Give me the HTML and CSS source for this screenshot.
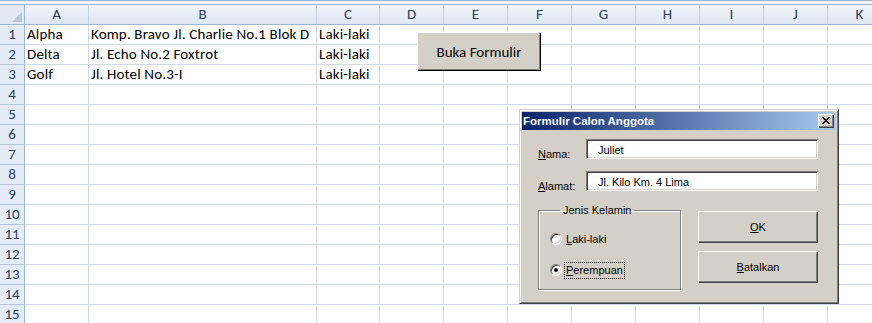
FILE: index.html
```html
<!DOCTYPE html>
<html lang="id">
<head>
<meta charset="utf-8">
<title>Formulir Calon Anggota</title>
<link rel="stylesheet" href="styles.css">
</head>
<body>
<div class="sheet">
  <div class="topline"></div>
  <div class="grid">
    <div class="corner"><svg width="10" height="10" viewBox="0 0 10 10"><polygon points="10,0 10,10 0,10" fill="#b6c7db"/></svg></div>
    <div class="ch">A</div><div class="ch">B</div><div class="ch">C</div><div class="ch">D</div><div class="ch">E</div><div class="ch">F</div><div class="ch">G</div><div class="ch">H</div><div class="ch">I</div><div class="ch">J</div><div class="ch">K</div>

    <div class="rh">1</div><div class="c">Alpha</div><div class="c">Komp. Bravo Jl. Charlie No.1 Blok D</div><div class="c">Laki-laki</div><div class="c"></div><div class="c"></div><div class="c"></div><div class="c"></div><div class="c"></div><div class="c"></div><div class="c"></div><div class="c"></div>
    <div class="rh">2</div><div class="c">Delta</div><div class="c">Jl. Echo No.2 Foxtrot</div><div class="c">Laki-laki</div><div class="c"></div><div class="c"></div><div class="c"></div><div class="c"></div><div class="c"></div><div class="c"></div><div class="c"></div><div class="c"></div>
    <div class="rh">3</div><div class="c">Golf</div><div class="c">Jl. Hotel No.3-I</div><div class="c">Laki-laki</div><div class="c"></div><div class="c"></div><div class="c"></div><div class="c"></div><div class="c"></div><div class="c"></div><div class="c"></div><div class="c"></div>
    <div class="rh">4</div><div class="c"></div><div class="c"></div><div class="c"></div><div class="c"></div><div class="c"></div><div class="c"></div><div class="c"></div><div class="c"></div><div class="c"></div><div class="c"></div><div class="c"></div>
    <div class="rh">5</div><div class="c"></div><div class="c"></div><div class="c"></div><div class="c"></div><div class="c"></div><div class="c"></div><div class="c"></div><div class="c"></div><div class="c"></div><div class="c"></div><div class="c"></div>
    <div class="rh">6</div><div class="c"></div><div class="c"></div><div class="c"></div><div class="c"></div><div class="c"></div><div class="c"></div><div class="c"></div><div class="c"></div><div class="c"></div><div class="c"></div><div class="c"></div>
    <div class="rh">7</div><div class="c"></div><div class="c"></div><div class="c"></div><div class="c"></div><div class="c"></div><div class="c"></div><div class="c"></div><div class="c"></div><div class="c"></div><div class="c"></div><div class="c"></div>
    <div class="rh">8</div><div class="c"></div><div class="c"></div><div class="c"></div><div class="c"></div><div class="c"></div><div class="c"></div><div class="c"></div><div class="c"></div><div class="c"></div><div class="c"></div><div class="c"></div>
    <div class="rh">9</div><div class="c"></div><div class="c"></div><div class="c"></div><div class="c"></div><div class="c"></div><div class="c"></div><div class="c"></div><div class="c"></div><div class="c"></div><div class="c"></div><div class="c"></div>
    <div class="rh">10</div><div class="c"></div><div class="c"></div><div class="c"></div><div class="c"></div><div class="c"></div><div class="c"></div><div class="c"></div><div class="c"></div><div class="c"></div><div class="c"></div><div class="c"></div>
    <div class="rh">11</div><div class="c"></div><div class="c"></div><div class="c"></div><div class="c"></div><div class="c"></div><div class="c"></div><div class="c"></div><div class="c"></div><div class="c"></div><div class="c"></div><div class="c"></div>
    <div class="rh">12</div><div class="c"></div><div class="c"></div><div class="c"></div><div class="c"></div><div class="c"></div><div class="c"></div><div class="c"></div><div class="c"></div><div class="c"></div><div class="c"></div><div class="c"></div>
    <div class="rh">13</div><div class="c"></div><div class="c"></div><div class="c"></div><div class="c"></div><div class="c"></div><div class="c"></div><div class="c"></div><div class="c"></div><div class="c"></div><div class="c"></div><div class="c"></div>
    <div class="rh">14</div><div class="c"></div><div class="c"></div><div class="c"></div><div class="c"></div><div class="c"></div><div class="c"></div><div class="c"></div><div class="c"></div><div class="c"></div><div class="c"></div><div class="c"></div>
    <div class="rh">15</div><div class="c"></div><div class="c"></div><div class="c"></div><div class="c"></div><div class="c"></div><div class="c"></div><div class="c"></div><div class="c"></div><div class="c"></div><div class="c"></div><div class="c"></div>
  </div>

  <button class="xl-btn" type="button">Buka Formulir</button>

  <div class="dialog">
    <div class="titlebar">
      <span class="title">Formulir Calon Anggota</span>
      <span class="close"><svg width="8" height="7" viewBox="0 0 8 7" shape-rendering="crispEdges"><path fill="#000" d="M0 0h2v1h-2z M6 0h2v1h-2z M1 1h2v1h-2z M5 1h2v1h-2z M2 2h4v1h-4z M3 3h2v1h-2z M2 4h4v1h-4z M1 5h2v1h-2z M5 5h2v1h-2z M0 6h2v1h-2z M6 6h2v1h-2z"/></svg></span>
    </div>
    <div class="client">
      <div class="field">
        <span class="label"><u>N</u>ama:</span>
        <div class="textbox">Juliet</div>
      </div>
      <div class="field">
        <span class="label"><u>A</u>lamat:</span>
        <div class="textbox">Jl. Kilo Km. 4 Lima</div>
      </div>
      <div class="lower">
        <fieldset class="group">
          <legend>Jenis Kelamin</legend>
          <div class="radio-row">
            <span class="radio"></span>
            <span class="rlabel"><u>L</u>aki-laki</span>
          </div>
          <div class="radio-row second">
            <span class="radio checked"></span>
            <span class="rlabel focus"><u>P</u>erempuan</span>
          </div>
        </fieldset>
        <div class="buttons">
          <button class="wbtn" type="button"><u>O</u>K</button>
          <button class="wbtn" type="button"><u>B</u>atalkan</button>
        </div>
      </div>
    </div>
  </div>
</div>
</body>
</html>
```
FILE: styles.css
```css
html, body {
  margin: 0;
  padding: 0;
  background: #fff;
}

body {
  width: 872px;
  height: 323px;
  overflow: hidden;
  font-family: "Carlito", "Liberation Sans", Arial, sans-serif;
}

.sheet {
  position: relative;
  width: 872px;
  height: 323px;
  overflow: hidden;
}

.topline {
  height: 4px;
  box-sizing: border-box;
  border-top: 1px solid #9eb6ce;
  background: #eef3f9;
}

.grid {
  display: grid;
  grid-template-columns: 25px 64px 228px 63px repeat(8, 64px);
  grid-template-rows: 21px;
  grid-auto-rows: 20px;
  width: max-content;
  font-size: 15px;
}

.corner {
  box-sizing: border-box;
  border-top: 1px solid #9eb6ce;
  border-bottom: 1px solid #9eb6ce;
  border-right: 1px solid #9eb6ce;
  background: #e1e9f4;
  display: flex;
  align-items: flex-end;
  justify-content: flex-end;
  padding: 0 2px 2px 0;
}

.corner svg {
  display: block;
}

.ch {
  box-sizing: border-box;
  border-top: 1px solid #9eb6ce;
  border-bottom: 1px solid #9eb6ce;
  border-right: 1px solid #c2d0e0;
  background: linear-gradient(#f0f4fa, #dfe7f2);
  color: #27415f;
  text-align: center;
  line-height: 19px;
}

.rh {
  box-sizing: border-box;
  border-right: 1px solid #9eb6ce;
  border-bottom: 1px solid #b3c5da;
  background: #e4ecf7;
  color: #27415f;
  text-align: center;
  line-height: 19px;
}

.c {
  box-sizing: border-box;
  border-right: 1px solid #d0d7e5;
  border-bottom: 1px solid #d0d7e5;
  padding-left: 2px;
  white-space: nowrap;
  line-height: 19px;
  letter-spacing: 0.15px;
  color: #000;
}

.xl-btn {
  position: absolute;
  left: 417px;
  top: 32px;
  width: 124px;
  height: 39px;
  box-sizing: border-box;
  margin: 0;
  padding: 0;
  border: none;
  background: #d4d0c8;
  box-shadow: inset 1px 1px 0 #fff, inset -1px -1px 0 #000, inset -2px -2px 0 #808080;
  font-family: "Carlito", "Liberation Sans", Arial, sans-serif;
  font-size: 15px;
  color: #000;
}

/* Windows classic dialog */
.dialog {
  position: absolute;
  left: 519px;
  top: 109px;
  width: 320px;
  height: 195px;
  box-sizing: border-box;
  background: #d4d0c8;
  border: 1px solid;
  border-color: #d4d0c8 #404040 #404040 #d4d0c8;
  box-shadow: inset 1px 1px 0 #fff, inset -1px -1px 0 #808080;
  padding: 2px;
  font-family: "Liberation Sans", Arial, sans-serif;
  font-size: 11px;
  color: #000;
}

.titlebar {
  height: 18px;
  display: flex;
  align-items: center;
  padding-left: 1px;
  background: linear-gradient(to right, #0a246a, #a6caf0);
}

.title {
  color: #fff;
  font-weight: bold;
  font-size: 11.5px;
  line-height: 14px;
}

.close {
  margin-left: auto;
  margin-right: 2px;
  width: 16px;
  height: 14px;
  box-sizing: border-box;
  background: #d4d0c8;
  box-shadow: inset 1px 1px 0 #fff, inset -1px -1px 0 #404040, inset -2px -2px 0 #808080;
  display: flex;
  align-items: center;
  justify-content: center;
  padding: 0 1px 1px 0;
}

.close svg {
  display: block;
}

.client {
  padding: 9px 18px 0 16px;
}

.field {
  display: flex;
  align-items: flex-start;
  height: 20px;
  margin-bottom: 12px;
}

.field + .field {
  margin-bottom: 0;
}

.label {
  width: 48px;
  flex: none;
  padding-top: 9px;
  line-height: 13px;
}

.textbox {
  flex: 1;
  height: 20px;
  box-sizing: border-box;
  background: #fff;
  border: 1px solid;
  border-color: #808080 #fff #fff #808080;
  box-shadow: inset 1px 1px 0 #404040, inset -1px -1px 0 #d4d0c8;
  padding: 3px 11px 0;
  line-height: 14px;
  white-space: nowrap;
}

.lower {
  display: flex;
  align-items: flex-start;
  margin-top: 13px;
}

.group {
  width: 143px;
  box-sizing: border-box;
  margin: 0;
  padding: 14px 0 11px 11px;
  border: 1px solid #808080;
  box-shadow: inset 1px 1px 0 #fff, 1px 1px 0 #fff;
  min-inline-size: 0;
}

.group legend {
  margin-left: 10px;
  padding: 0 3px;
  line-height: 13px;
  font-size: 11px;
}

.radio-row {
  display: flex;
  align-items: center;
  height: 16px;
}

.radio-row.second {
  margin-top: 15px;
}

.radio {
  width: 12px;
  height: 12px;
  box-sizing: border-box;
  border-radius: 50%;
  border: 1px solid;
  border-color: #808080 #fff #fff #808080;
  box-shadow: inset 1px 1px 0 #404040, inset -1px -1px 0 #d4d0c8;
  background: #fff;
  display: flex;
  align-items: center;
  justify-content: center;
  flex: none;
}

.radio.checked::after {
  content: "";
  width: 4px;
  height: 4px;
  border-radius: 50%;
  background: #000;
}

.rlabel {
  margin-left: 2px;
  padding: 1px 1px;
  line-height: 13px;
  border: 1px dotted transparent;
  white-space: nowrap;
}

.rlabel.focus {
  border-color: #000;
}

.buttons {
  margin-left: auto;
  width: 120px;
  padding-top: 7px;
  display: flex;
  flex-direction: column;
  gap: 8px;
}

.wbtn {
  height: 32px;
  box-sizing: border-box;
  margin: 0;
  padding: 0;
  border: none;
  background: #d4d0c8;
  box-shadow: inset 1px 1px 0 #fff, inset -1px -1px 0 #404040, inset -2px -2px 0 #808080;
  font-family: "Liberation Sans", Arial, sans-serif;
  font-size: 11px;
  color: #000;
}
```
